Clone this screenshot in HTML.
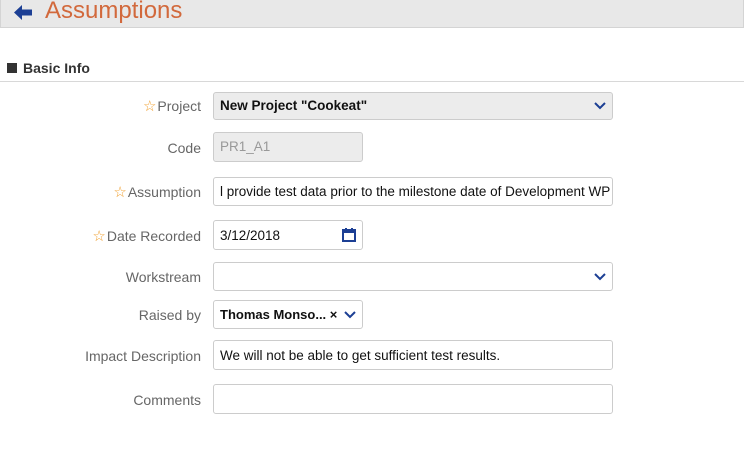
<!DOCTYPE html>
<html><head><style>
body{margin:0;width:744px;height:464px;background:#fff;font-family:"Liberation Sans",sans-serif;position:relative;overflow:hidden}
.hdr{position:absolute;left:0;top:0;width:742px;height:27px;background:#e8e8e8;border:1px solid #d4d4d4;border-top:none}
.title{position:absolute;left:44px;top:-3px;font-size:24px;color:#d2693c}
.sec{position:absolute;left:7px;top:60px;font-size:14px;font-weight:bold;color:#333}
.sec i{display:inline-block;width:10px;height:10px;background:#333;margin-right:6px;vertical-align:0}
.line{position:absolute;left:0;top:81px;width:744px;height:1px;background:#d8d8d8}
.lbl{position:absolute;right:543px;font-size:14px;color:#666;text-align:right;white-space:nowrap}
.lbl b{color:#f0a030;font-weight:normal;font-size:15px;margin-right:1px}
.box{position:absolute;left:213px;border:1px solid #ccc;border-radius:3px;box-sizing:border-box;font-size:13.5px;color:#111;padding-left:6px;white-space:nowrap;overflow:hidden}
.chev{position:absolute;right:6px;top:50%;margin-top:-5px}
</style></head><body>
<div class="hdr"><svg style="position:absolute;left:13px;top:5px" width="19" height="15"><path d="M0 7.5 L8 0 L8 4.5 L18 4.5 L18 10.5 L8 10.5 L8 15 Z" fill="#1c3f94"/></svg><div class="title">Assumptions</div></div>
<div class="sec"><i></i>Basic Info</div>
<div class="line"></div>

<div class="lbl" style="top:97px"><b>☆</b>Project</div>
<div class="box" style="top:92px;width:400px;height:28px;line-height:26px;background:#ececec;font-weight:bold">New Project "Cookeat"<svg class="chev" width="12" height="10"><path d="M1 2 L6 7 L11 2" stroke="#1c3f94" stroke-width="2" fill="none"/></svg></div>

<div class="lbl" style="top:140px">Code</div>
<div class="box" style="top:132px;width:150px;height:30px;line-height:28px;background:#ececec;color:#999">PR1_A1</div>

<div class="lbl" style="top:183px"><b>☆</b>Assumption</div>
<div class="box" style="top:177px;width:400px;height:29px;line-height:27px">l provide test data prior to the milestone date of Development WP</div>

<div class="lbl" style="top:227px"><b>☆</b>Date Recorded</div>
<div class="box" style="top:220px;width:150px;height:30px;line-height:29px">3/12/2018<svg style="position:absolute;right:6px;top:7px" width="14" height="14"><rect x="1" y="2" width="12" height="11" fill="none" stroke="#1c3f94" stroke-width="2"/><rect x="1" y="2" width="12" height="3" fill="#1c3f94"/><rect x="3" y="0" width="2" height="3" fill="#1c3f94"/><rect x="9" y="0" width="2" height="3" fill="#1c3f94"/></svg></div>

<div class="lbl" style="top:269px">Workstream</div>
<div class="box" style="top:262px;width:400px;height:29px"><svg class="chev" width="12" height="10"><path d="M1 2 L6 7 L11 2" stroke="#1c3f94" stroke-width="2" fill="none"/></svg></div>

<div class="lbl" style="top:307px">Raised by</div>
<div class="box" style="top:300px;width:150px;height:29px;line-height:28px;font-weight:bold;font-size:13px">Thomas Monso... ×<svg class="chev" width="12" height="10"><path d="M1 2 L6 7 L11 2" stroke="#1c3f94" stroke-width="2" fill="none"/></svg></div>

<div class="lbl" style="top:348px">Impact Description</div>
<div class="box" style="top:340px;width:400px;height:30px;line-height:29px">We will not be able to get sufficient test results.</div>

<div class="lbl" style="top:392px">Comments</div>
<div class="box" style="top:384px;width:400px;height:30px"></div>
</body></html>
